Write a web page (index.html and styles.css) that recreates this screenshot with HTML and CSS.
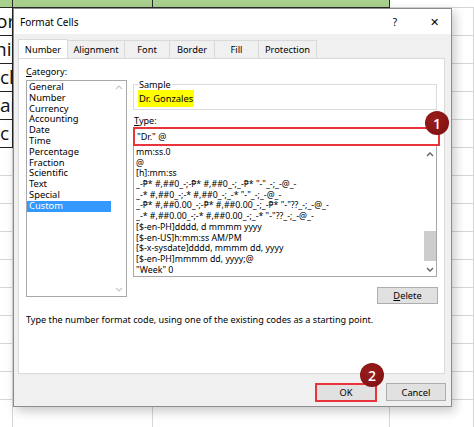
FILE: index.html
```html
<!DOCTYPE html>
<html>
<head>
<meta charset="utf-8">
<link rel="stylesheet" href="styles.css">
</head>
<body>
<div class="sheet">
  <div class="c band bandA"></div><div class="c band bandB"></div><div class="c band bandC"></div><div class="c bandD"></div>
  <div class="c a blk"><span class="w w1">or</span></div><div class="c"></div><div class="c"></div><div class="c"></div>
  <div class="c a blk"><span class="w w2">ni</span></div><div class="c"></div><div class="c"></div><div class="c"></div>
  <div class="c a blk"><span class="w w3">cl</span></div><div class="c"></div><div class="c"></div><div class="c"></div>
  <div class="c a blk"><span class="w w4">ar</span></div><div class="c"></div><div class="c"></div><div class="c"></div>
  <div class="c a blk"><span class="w w5">c</span></div><div class="c"></div><div class="c"></div><div class="c"></div>
  <div class="c a"></div><div class="c"></div><div class="c"></div><div class="c"></div>
  <div class="c a"></div><div class="c"></div><div class="c"></div><div class="c"></div>
  <div class="c a"></div><div class="c"></div><div class="c"></div><div class="c"></div>
  <div class="c a"></div><div class="c"></div><div class="c"></div><div class="c"></div>
  <div class="c a"></div><div class="c"></div><div class="c"></div><div class="c"></div>
  <div class="c a"></div><div class="c"></div><div class="c"></div><div class="c"></div>
  <div class="c a"></div><div class="c"></div><div class="c"></div><div class="c"></div>
  <div class="c a"></div><div class="c"></div><div class="c"></div><div class="c"></div>
  <div class="c a"></div><div class="c"></div><div class="c"></div><div class="c"></div>
  <div class="c a"></div><div class="c"></div><div class="c"></div><div class="c"></div>
</div>

<div class="dialog">
  <div class="titlebar">
    <span class="title">Format Cells</span>
    <span class="tbtns"><span class="help">?</span><span class="close">✕</span></span>
  </div>
  <div class="tabs">
    <div class="tab sel" style="width:50px">Number</div>
    <div class="tab" style="width:57px">Alignment</div>
    <div class="tab" style="width:45px">Font</div>
    <div class="tab" style="width:45px">Border</div>
    <div class="tab" style="width:44px">Fill</div>
    <div class="tab" style="width:58px">Protection</div>
  </div>
  <div class="panel">
    <div class="cols">
      <div class="leftcol">
        <div class="lbl"><u>C</u>ategory:</div>
        <div class="catlist">
          <div class="items">
            <div class="it">General</div>
            <div class="it">Number</div>
            <div class="it">Currency</div>
            <div class="it">Accounting</div>
            <div class="it">Date</div>
            <div class="it">Time</div>
            <div class="it">Percentage</div>
            <div class="it">Fraction</div>
            <div class="it">Scientific</div>
            <div class="it">Text</div>
            <div class="it">Special</div>
            <div class="it selit">Custom</div>
          </div>
          <div class="vscroll light">
            <svg class="arr" width="8" height="5" viewBox="0 0 8 5"><path d="M1 4 L4 1 L7 4" fill="none" stroke="#c8c8c8" stroke-width="1.2"/></svg>
            <svg class="arr" width="8" height="5" viewBox="0 0 8 5"><path d="M1 1 L4 4 L7 1" fill="none" stroke="#c8c8c8" stroke-width="1.2"/></svg>
          </div>
        </div>
      </div>
      <div class="rightcol">
        <fieldset class="sample">
          <legend>Sample</legend>
          <span class="sampletext">Dr. Gonzales</span>
        </fieldset>
        <div class="lbl typelbl"><u>T</u>ype:</div>
        <div class="typebox">"Dr." @</div>
        <div class="typelist">
          <div class="items">
            <div class="ti">mm:ss.0</div>
            <div class="ti">@</div>
            <div class="ti">[h]:mm:ss</div>
            <div class="ti">_-₱* #,##0_-;-₱* #,##0_-;_-₱* "-"_-;_-@_-</div>
            <div class="ti">_-* #,##0_-;-* #,##0_-;_-* "-"_-;_-@_-</div>
            <div class="ti">_-₱* #,##0.00_-;-₱* #,##0.00_-;_-₱* "-"??_-;_-@_-</div>
            <div class="ti">_-* #,##0.00_-;-* #,##0.00_-;_-* "-"??_-;_-@_-</div>
            <div class="ti">[$-en-PH]dddd, d mmmm yyyy</div>
            <div class="ti">[$-en-US]h:mm:ss AM/PM</div>
            <div class="ti">[$-x-sysdate]dddd, mmmm dd, yyyy</div>
            <div class="ti">[$-en-PH]mmmm dd, yyyy;@</div>
            <div class="ti">"Week" 0</div>
          </div>
          <div class="vscroll">
            <svg class="arr" width="8" height="5" viewBox="0 0 8 5"><path d="M1 4 L4 1 L7 4" fill="none" stroke="#606060" stroke-width="1.3"/></svg>
            <div class="track"><div class="thumb"></div></div>
            <svg class="arr" width="8" height="5" viewBox="0 0 8 5"><path d="M1 1 L4 4 L7 1" fill="none" stroke="#606060" stroke-width="1.3"/></svg>
          </div>
        </div>
        <div class="delrow"><button class="btn del"><u>D</u>elete</button></div>
      </div>
    </div>
    <div class="desc">Type the number format code, using one of the existing codes as a starting point.</div>
  </div>
  <div class="footer">
    <button class="btn ok">OK</button>
    <button class="btn cancel">Cancel</button>
  </div>
  <div class="badge b1">1</div>
  <div class="badge b2">2</div>
</div>
</body>
</html>
```

FILE: styles.css
```css
* { box-sizing: border-box; }
html, body { margin: 0; padding: 0; }
body {
  width: 474px; height: 427px; overflow: hidden; position: relative;
  background: #fff;
  font-family: "Noto Sans", "Open Sans", sans-serif;
}
.sheet {
  display: grid;
  grid-template-columns: 13px 140px 237px 84px;
  grid-template-rows: 8px repeat(15, 28px);
}
.c { border-right: 1px solid #d6d6d6; border-bottom: 1px solid #d6d6d6; overflow: hidden; white-space: nowrap; }
.band { background: #a9d18e; border-right: 1px solid #2b2b2b; border-bottom: 1px solid #2b2b2b; }
.bandD { border-right: none; }
.blk { border-right: 1px solid #222; border-bottom: 1px solid #222; }
.w { display: block; font-family: "Open Sans", sans-serif; font-size: 19px; color: #111; line-height: 27px; }
.w1 { margin-left: -4px; }
.w2 { margin-left: -5px; }
.w3 { margin-left: 0px; }
.w4 { margin-left: 0px; }
.w5 { margin-left: 0px; }

.dialog {
  position: absolute; left: 13px; top: 8px; width: 439px; height: 399px;
  background: #f0f0f0; border: 1px solid #8c8c8c;
  box-shadow: 3px 4px 10px rgba(0,0,0,0.22);
  display: flex; flex-direction: column;
  font-size: 9.1px; color: #000;
}
.titlebar {
  height: 25px; background: #fff; display: flex; align-items: center;
  justify-content: space-between; padding: 0 12px 0 6px;
}
.title { font-size: 10px; }
.tbtns { display: flex; gap: 33px; align-items: center; font-size: 11px; }
.help { font-size: 10px; }
.close { font-size: 11px; }
.tabs { display: flex; padding: 6px 0 0 4px; height: 24px; }
.tab {
  height: 18px; border: 1px solid #d9d9d9; border-bottom: none; border-left: none;
  display: flex; align-items: center; justify-content: center;
  background: #f0f0f0; font-size: 9.3px;
}
.tab.sel { background: #fff; border-left: 1px solid #d9d9d9; height: 19px; margin-top: -1px; }
.panel {
  margin: 0 6px 0 4px; height: 316px; background: #fff; border: 1px solid #d9d9d9;
  display: flex; flex-direction: column; padding: 6px 0 0 7px;
}
.cols { display: flex; gap: 6px; }
.leftcol { width: 101px; }
.lbl { height: 14px; line-height: 14px; }
.catlist {
  height: 217px; border: 1px solid #a8a8a8; display: flex; margin-top: 1px;
}
.items { flex: 1; padding-top: 1px; }
.it { height: 10.8px; line-height: 10.8px; padding-left: 2px; white-space: nowrap; font-size: 9.4px; }
.selit { background: #3399ff; color: #fff; margin-right: 0; }
.vscroll {
  width: 12px; display: flex; flex-direction: column; align-items: center;
  justify-content: space-between; padding: 4px 0;
}
.catlist .vscroll { width: 15px; }
.rightcol { width: 307px; display: flex; flex-direction: column; }
.sample {
  margin: 15px 3px 0 0; padding: 0 4px 0 4px; border: 1px solid #dcdcdc; height: 30px;
}
.sample legend { padding: 0 1px; margin-left: 0px; line-height: 9px; }
.sampletext { display: inline-block; background: #ffff00; padding: 2px 1px; line-height: 13px; margin-top: 1px; font-size: 9.4px; }
.typelbl { margin-top: 5px; padding-left: 1px; height: 12px; line-height: 12px; }
.typebox {
  height: 19px; border: 2px solid #e8343a; line-height: 15px; padding-left: 2px;
}
.typelist {
  height: 131px; border: 1px solid #a8a8a8; border-top: none; display: flex; margin-right: 3px;
}
.ti { height: 10.7px; line-height: 10.7px; padding-left: 2px; white-space: nowrap; font-size: 8.8px; }
.typelist .items { padding-top: 1px; }
.typelist .vscroll { margin-right: 0; padding: 6px 0 4px; }
.track { flex: 1; width: 12px; position: relative; }
.thumb { position: absolute; left: 0; right: 0; top: 74px; height: 30px; background: #cdcdcd; }
.delrow { display: flex; justify-content: flex-end; margin-top: 10px; padding-right: 2px; }
.btn {
  font-family: inherit; font-size: 9.3px; background: #e1e1e1; border: 1px solid #adadad;
  color: #000; padding: 0; margin: 0; cursor: default;
}
.del { width: 61px; height: 17px; }
.desc { margin-top: 9px; line-height: 13px; }
.footer { display: flex; justify-content: flex-end; gap: 9px; padding: 9px 5px 0 0; }
.ok { width: 62px; height: 19px; border: 2px solid #e8343a; }
.cancel { width: 60px; height: 18px; }
.badge {
  position: absolute; width: 24px; height: 24px; border-radius: 50%;
  background: radial-gradient(circle at 40% 35%, #9b1c1c, #7a1010);
  color: #fff; font-size: 14px; font-weight: 600;
  display: flex; align-items: center; justify-content: center;
  font-family: "Open Sans", sans-serif;
}
.b1 { left: 411px; top: 102px; }
.b2 { left: 346px; top: 354px; }
```
